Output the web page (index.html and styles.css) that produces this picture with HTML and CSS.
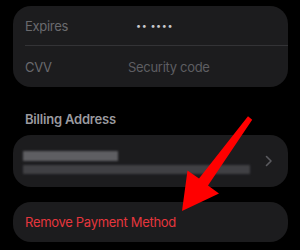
FILE: index.html
```html
<!DOCTYPE html>
<html lang="en">
<head>
    <meta charset="UTF-8">
    <meta name="viewport" content="width=device-width, initial-scale=1.0">
    <title>Payment Method</title>
    <link rel="stylesheet" href="styles.css">
</head>
<body>
    <div class="page">
        <!-- card details -->
        <div class="card details">
            <div class="row">
                <span class="key">Expires</span>
                <span class="dots">•• ••••</span>
            </div>
            <div class="divider"></div>
            <div class="row">
                <span class="key">CVV</span>
                <span class="placeholder">Security code</span>
            </div>
        </div>

        <div class="section-title">Billing Address</div>

        <div class="card address">
            <div class="address-lines">
                <div class="blur line-one"></div>
                <div class="blur line-two"></div>
            </div>
            <svg class="chevron" width="8" height="12" viewBox="0 0 8 12">
                <path d="M1.5 1.5 L6 6 L1.5 10.5" fill="none" stroke="#5b5b60" stroke-width="1.6" stroke-linecap="round" stroke-linejoin="round"/>
            </svg>
        </div>

        <div class="card remove">
            <span class="remove-text">Remove Payment Method</span>
        </div>
    </div>

    <!-- red arrow drawn on top of the screenshot -->
    <svg class="arrow" width="300" height="250" viewBox="0 0 300 250">
        <polygon points="248,116.3 252.2,119.7 208,185.5 219,193.5 182,211 187.5,170.5 199,178.5" fill="#ff0000"/>
    </svg>
</body>
</html>
```

FILE: styles.css
```css
body {
    margin: 0;
    background: #000;
    font-family: Inter, "Noto Sans", sans-serif;
    width: 300px;
    height: 250px;
    overflow: hidden;
    position: relative;
}
.page {
    padding: 6px 12px 0 13px;
}
.card {
    background: #1c1c1e;
    border-radius: 18px;
}
.details {
    padding-left: 12px;
}
.row {
    display: grid;
    grid-template-columns: 103px 1fr;
    align-items: center;
    height: 39px;
    font-size: 13px;
    letter-spacing: -0.3px;
}
.row:last-child {
    height: 41px;
}
.divider {
    height: 1px;
    background: #333336;
}
.key {
    color: #6a6a6e;
}
.dots {
    color: #c8c8cc;
    font-size: 9px;
    letter-spacing: 0.6px;
    padding-left: 8px;
}
.placeholder {
    color: #5e5e62;
}
.section-title {
    color: #9a9a9f;
    font-size: 13px;
    font-weight: 600;
    letter-spacing: -0.2px;
    line-height: 16px;
    margin: 24px 0 8px 12px;
}
.address {
    height: 52px;
    display: flex;
    align-items: center;
    padding: 0 15px 0 10px;
}
.address-lines {
    flex: 1;
    display: flex;
    flex-direction: column;
    gap: 4px;
    padding-top: 2px;
}
.blur {
    filter: blur(1.2px);
}
.line-one {
    height: 10px;
    width: 95px;
    background: #5e5e62;
}
.line-two {
    height: 9px;
    width: 227px;
    background: #404044;
}
.chevron {
    margin-left: auto;
}
.remove {
    margin-top: 15px;
    height: 40px;
    display: flex;
    align-items: center;
    padding-left: 12px;
}
.remove-text {
    color: #e5363d;
    font-size: 13px;
    letter-spacing: -0.3px;
}
.arrow {
    position: absolute;
    left: 0;
    top: 0;
}
```
